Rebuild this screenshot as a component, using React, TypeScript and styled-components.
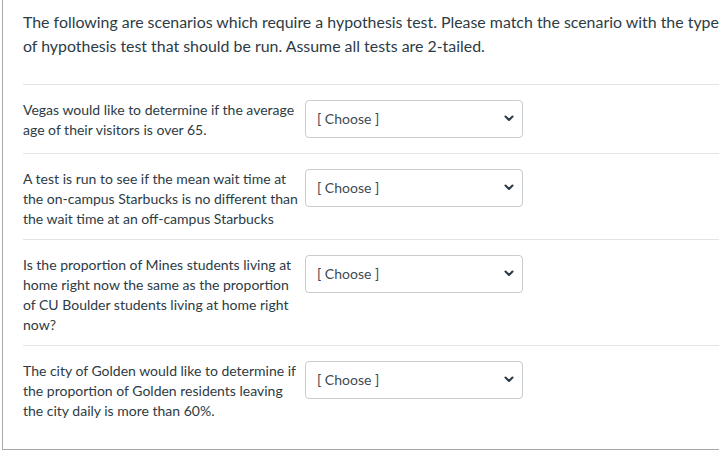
import React from 'react';
import styled, { createGlobalStyle } from 'styled-components';

const Global = createGlobalStyle`
  html, body {
    margin: 0;
    padding: 0;
    background: #fff;
    overflow: hidden;
  }
  body {
    font-family: Lato, "Open Sans", "Liberation Sans", sans-serif;
    color: #2d3b45;
  }
`;

const Panel = styled.div`
  margin-left: 2px;
  width: 760px;
  height: 450px;
  box-sizing: border-box;
  border-left: 1px solid #a8a8a8;
  border-bottom: 1px solid #a8a8a8;
  padding: 10px 0 20px 20px;
`;

const Intro = styled.p`
  margin: 0 0 26px;
  width: 702px;
  font-size: 15.9px;
  line-height: 24px;
  color: #2d3b45;
`;

const Row = styled.div`
  display: flex;
  align-items: flex-start;
  gap: 2px;
  padding: 15px 0 10px;
  border-top: 1px solid #e2e4e6;
`;

const Prompt = styled.div`
  width: 280px;
  flex: none;
  font-size: 14px;
  line-height: 20px;
  color: #2d3b45;
`;

const SelectBox = styled.div`
  width: 218px;
  height: 38px;
  box-sizing: border-box;
  margin-bottom: 5px;
  flex: none;
  display: flex;
  align-items: center;
  justify-content: space-between;
  padding: 0 8px 2px 11px;
  border: 1px solid #c7cdd1;
  border-radius: 4px;
  background: #fff;
  font-size: 14px;
  color: #3d4a53;
`;

const Chevron = () => (
  <svg width="10" height="7" viewBox="0 0 10 7">
    <polyline
      points="1.5,1.5 5,5 8.5,1.5"
      fill="none"
      stroke="#2d3b45"
      strokeWidth="2.1"
      strokeLinecap="round"
      strokeLinejoin="round"
    />
  </svg>
);

const scenarios = [
  'Vegas would like to determine if the average age of their visitors is over 65.',
  'A test is run to see if the mean wait time at the on-campus Starbucks is no different than the wait time at an off-campus Starbucks',
  'Is the proportion of Mines students living at home right now the same as the proportion of CU Boulder students living at home right now?',
  'The city of Golden would like to determine if the proportion of Golden residents leaving the city daily is more than 60%.',
];

const App = () => (
  <>
    <Global />
    <Panel>
      <Intro>
        The following are scenarios which require a hypothesis test. Please match the scenario with the type of
        hypothesis test that should be run. Assume all tests are 2-tailed.
      </Intro>
      {scenarios.map(s => (
        <Row key={s}>
          <Prompt>{s}</Prompt>
          <SelectBox>
            <span>[ Choose ]</span>
            <Chevron />
          </SelectBox>
        </Row>
      ))}
    </Panel>
  </>
);

export default App;
